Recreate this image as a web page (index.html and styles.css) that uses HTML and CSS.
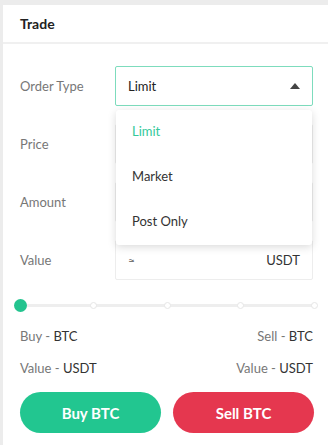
FILE: index.html
```html
<!DOCTYPE html>
<html lang="en">
<head>
    <meta charset="UTF-8">
    <meta name="viewport" content="width=device-width, initial-scale=1.0">
    <title>Trade</title>
    <link rel="stylesheet" href="styles.css">
</head>
<body>
    <div class="card">
        <div class="header">Trade</div>

        <div class="form">
            <div class="row">
                <label>Order Type</label>
                <div class="select-wrap">
                    <div class="select">
                        <span>Limit</span>
                        <span class="caret"></span>
                    </div>
                    <!-- Dropdown -->
                    <div class="menu">
                        <div class="item active">Limit</div>
                        <div class="item">Market</div>
                        <div class="item">Post Only</div>
                    </div>
                </div>
            </div>
            <div class="row">
                <label>Price</label>
                <div class="input"></div>
            </div>
            <div class="row">
                <label>Amount</label>
                <div class="input"></div>
            </div>
            <div class="row">
                <label>Value</label>
                <div class="input">
                    <span class="approx">≈</span>
                    <span class="unit">USDT</span>
                </div>
            </div>
        </div>

        <div class="slider">
            <div class="track"></div>
            <span class="stop knob"></span>
            <span class="stop"></span>
            <span class="stop"></span>
            <span class="stop"></span>
            <span class="stop"></span>
        </div>

        <div class="info">
            <div class="pair">
                <span>Buy - <b>BTC</b></span>
                <span>Sell - <b>BTC</b></span>
            </div>
            <div class="pair">
                <span>Value - <b>USDT</b></span>
                <span>Value - <b>USDT</b></span>
            </div>
        </div>

        <div class="buttons">
            <button class="buy">Buy BTC</button>
            <button class="sell">Sell BTC</button>
        </div>
    </div>
</body>
</html>
```

FILE: styles.css
```css
body {
    margin: 0;
    padding: 5px 0 0 3px;
    font-family: Lato, "Open Sans", sans-serif;
    background-color: #ececec;
    color: #333;
}

.card {
    background: #fff;
    height: 440px;
}

/* Header */
.header {
    height: 37px;
    line-height: 38px;
    padding-left: 17px;
    font-size: 14px;
    font-weight: bold;
    color: #222;
    border-bottom: 2px solid #f0f0f0;
}

/* Form */
.form {
    display: flex;
    flex-direction: column;
    gap: 18px;
    padding: 22px 15px 0 17px;
}

.row {
    display: flex;
    align-items: center;
    height: 40px;
}

.row label {
    width: 95px;
    font-size: 13px;
    color: #777;
}

.select-wrap {
    position: relative;
    flex: 1;
    height: 40px;
}

.select {
    box-sizing: border-box;
    height: 40px;
    border: 1.5px solid #7ddcbd;
    border-radius: 2px;
    display: flex;
    align-items: center;
    justify-content: space-between;
    padding: 0 12px;
    font-size: 13px;
    color: #222;
}

.caret {
    width: 0;
    height: 0;
    border-left: 5px solid transparent;
    border-right: 5px solid transparent;
    border-bottom: 6px solid #444;
}

.menu {
    position: absolute;
    top: 44px;
    left: 1px;
    right: 1px;
    z-index: 2;
    background: #fff;
    border-radius: 3px;
    box-shadow: 0 2px 8px rgba(0, 0, 0, 0.15);
    padding: 0 16px;
    display: flex;
    flex-direction: column;
}

.menu .item {
    height: 45px;
    line-height: 43px;
    font-size: 13px;
    color: #333;
}

.menu .item.active {
    color: #34c99a;
}

.input {
    box-sizing: border-box;
    flex: 1;
    height: 40px;
    border: 1px solid #ededed;
    border-radius: 2px;
    display: flex;
    align-items: center;
    justify-content: space-between;
    padding: 0 12px;
    font-size: 13px;
}

.approx {
    font-size: 12px;
    color: #777;
}

.unit {
    color: #333;
}

/* Slider */
.slider {
    position: relative;
    margin: 18px 14px 0 17px;
    height: 14px;
    display: flex;
    align-items: center;
    justify-content: space-between;
}

.track {
    position: absolute;
    left: 0;
    right: 0;
    top: 6px;
    height: 3px;
    background: #eeeeee;
}

.stop {
    position: relative;
    width: 0;
    height: 14px;
}

.stop::after {
    content: "";
    position: absolute;
    box-sizing: border-box;
    top: 3.5px;
    left: -3.5px;
    width: 7px;
    height: 7px;
    border-radius: 50%;
    background: #fff;
    border: 1.5px solid #e6e6e6;
}

.stop.knob::after {
    top: 0.5px;
    left: -6.5px;
    width: 13px;
    height: 13px;
    border: none;
    background: #24c48f;
}

/* Info */
.info {
    padding: 16px 15px 0 17px;
    font-size: 13px;
    color: #777;
}

.pair {
    display: flex;
    justify-content: space-between;
    height: 32px;
}

.pair b {
    font-weight: normal;
    color: #333;
}

/* Buttons */
.buttons {
    display: flex;
    gap: 12px;
    padding: 0 14px 0 17px;
}

.buttons button {
    flex: 1;
    height: 41px;
    border: none;
    border-radius: 21px;
    color: #fff;
    font-family: Lato, "Open Sans", sans-serif;
    font-size: 15px;
    font-weight: bold;
}

.buy {
    background: #22c690;
}

.sell {
    background: #e5374f;
}
```
